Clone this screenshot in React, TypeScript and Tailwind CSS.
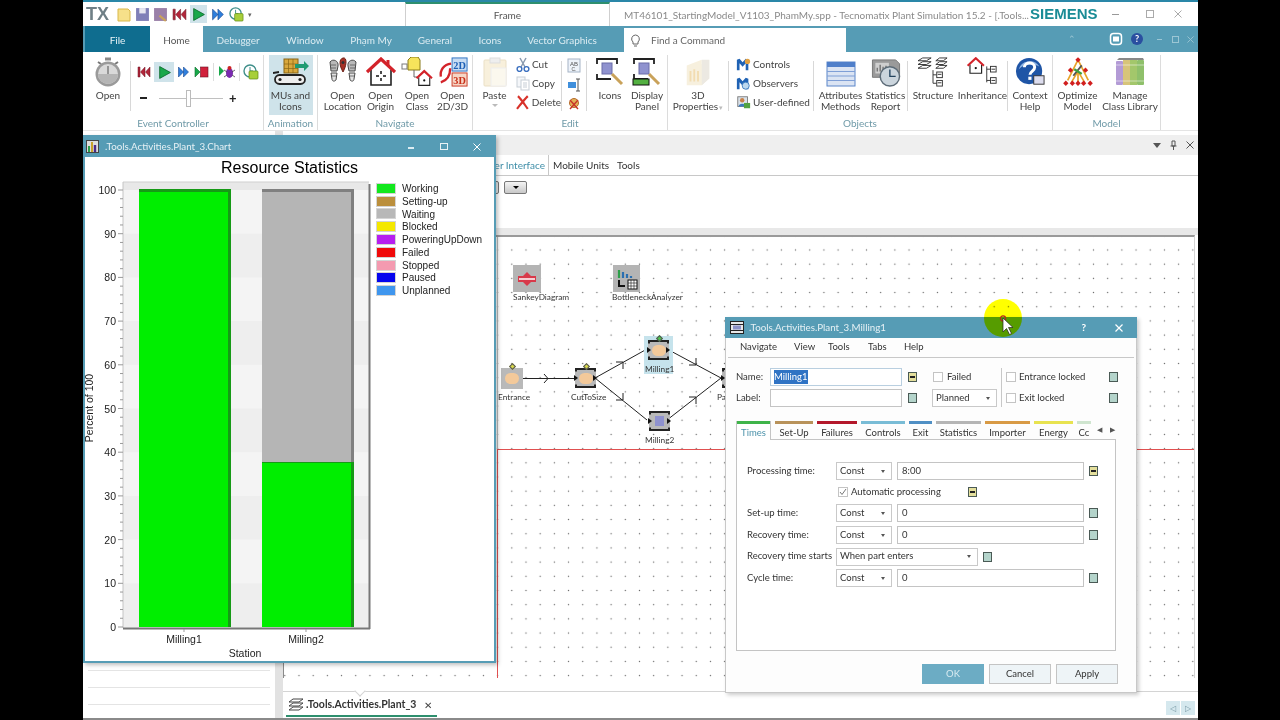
import React from "react";

const Stopwatch = () => (
  <svg width="30" height="30" viewBox="0 0 30 30">
    <rect x="12" y="0.5" width="6" height="3" fill="#888" />
    <path d="M5 5l3 2M25 5l-3 2" stroke="#777" strokeWidth="2" />
    <circle cx="15" cy="17" r="12.5" fill="#9a9a9a" />
    <circle cx="15" cy="17" r="10" fill="#d9d9d9" />
    <path d="M5 17a10 10 0 0 0 20 0z" fill="#b5b5b5" />
    <path d="M15 17V9" stroke="#666" strokeWidth="1.2" />
  </svg>
);
const Rewind = ({ s = 14 }: { s?: number }) => (
  <svg width={s} height={s} viewBox="0 0 14 14">
    <path d="M1 2h2v10H1zM8 2v10L3.5 7zM13 2v10L8.5 7z" fill="#b3263a" stroke="#6b1222" strokeWidth="0.5" />
  </svg>
);
const Play = ({ s = 15 }: { s?: number }) => (
  <svg width={s} height={s} viewBox="0 0 14 14">
    <path d="M2.5 1.5v11L12.5 7z" fill="#19a84a" stroke="#0c6b2c" strokeWidth="0.8" />
  </svg>
);
const Forward = ({ s = 14 }: { s?: number }) => (
  <svg width={s} height={s} viewBox="0 0 14 14">
    <path d="M1.5 2v10L6.5 7zM6.5 2v10L11.5 7z" fill="#2f7fdc" stroke="#17468f" strokeWidth="0.6" />
  </svg>
);
const StepBox = () => (
  <svg width="15" height="14" viewBox="0 0 15 14">
    <path d="M1 2v10l5-5z" fill="#19a84a" stroke="#0c6b2c" strokeWidth="0.6" />
    <rect x="6.5" y="2" width="7.5" height="10" fill="#d1213c" stroke="#6b1222" strokeWidth="0.6" />
  </svg>
);
const Bug = () => (
  <svg width="18" height="16" viewBox="0 0 18 16">
    <path d="M1 2v10l5-5z" fill="#19a84a" />
    <ellipse cx="11.5" cy="9" rx="3.5" ry="5" fill="#7a2bb0" />
    <circle cx="11.5" cy="4" r="2" fill="#c22" />
    <path d="M6 6l3 2M17 6l-3 2M6 13l3-2M17 13l-3-2" stroke="#444" strokeWidth="0.8" />
  </svg>
);
const ClockGreen = ({ s = 16 }: { s?: number }) => (
  <svg width={s} height={s} viewBox="0 0 16 16">
    <circle cx="7" cy="7" r="6" fill="#fff" stroke="#3f8f8a" strokeWidth="1.4" />
    <path d="M7 3v4h3" stroke="#3f8f8a" fill="none" />
    <rect x="6" y="7" width="9" height="8" rx="1" fill="#a8cf3a" stroke="#5d8a14" strokeWidth="0.7" />
  </svg>
);
const Conveyor = () => (
  <svg width="36" height="30" viewBox="0 0 36 30">
    <rect x="11" y="2" width="14" height="14" fill="#d9a83d" stroke="#8a6514" />
    <path d="M11 7h14M11 11.500h14M15.500 2v14M20 2v14" stroke="#8a6514" strokeWidth="0.7" />
    <path d="M22 7h9V4l5 5-5 5v-3h-9z" fill="#1f9a72" />
    <rect x="2" y="18" width="30" height="9" rx="4.500" fill="#eee" stroke="#222" strokeWidth="1.800" />
    <circle cx="7" cy="22.500" r="1.600" fill="#222" />
    <circle cx="27" cy="22.500" r="1.600" fill="#222" />
    <path d="M0 16l6-1" stroke="#222" strokeWidth="1.800" />
  </svg>
);
const Shoe = ({ x, y, flip }: { x: number; y: number; flip?: boolean }) => (
  <g transform={`translate(${x} ${y}) ${flip ? "scale(-1 1)" : ""}`}>
    <path d="M-4 -9c3-4 9-1 8 4l-1 5h-6z" fill="#b9b9b9" stroke="#4a4a4a" />
    <path d="M-3 2h6l-1 7c-2 2-4 1-4-1z" fill="#e2e2e2" stroke="#4a4a4a" />
    <path d="M-3 -6h5M-3 -3h5M-2 5h4" stroke="#555" strokeWidth="0.8" />
  </g>
);
const Shoes = () => (
  <svg width="30" height="30" viewBox="0 0 30 30">
    <Shoe x={6} y={14} />
    <Shoe x={24} y={14} flip />
    <path d="M15 15C11 8 11 2 15 1s4 7 0 14z" fill="#a83226" stroke="#6b2016" />
    <circle cx="15" cy="5.500" r="1.500" fill="#333" />
  </svg>
);
const House = ({ s = 30 }: { s?: number }) => (
  <svg width={s} height={s} viewBox="0 0 30 30">
    <path d="M5 13v15h20V13" fill="#fff" stroke="#222" strokeWidth="1.600" />
    <path d="M1 15L15 2l14 13" fill="none" stroke="#d3232a" strokeWidth="3.200" />
    <path d="M22 3v6" stroke="#d3232a" strokeWidth="3" />
    <path d="M15 14v3M15 21v3M10 19h3M17 19h3" stroke="#111" strokeWidth="1.500" />
  </svg>
);
const ClassIcon = () => (
  <svg width="32" height="30" viewBox="0 0 32 30">
    <rect x="1" y="7" width="5" height="5" fill="#fff" stroke="#7a7a7a" />
    <path d="M7 3l3-3h7l2 3v10H7z" fill="#f6e35b" stroke="#8a7a1a" />
    <path d="M13 13v7h3" stroke="#666" fill="none" />
    <g transform="translate(15 13) scale(0.55)"><path d="M5 13v15h20V13" fill="#fff" stroke="#222" strokeWidth="2" /><path d="M1 15L15 2l14 13" fill="none" stroke="#d3232a" strokeWidth="4" /><circle cx="15" cy="19" r="2" fill="#111" /></g>
  </svg>
);
const TwoD = () => (
  <svg width="32" height="30" viewBox="0 0 32 32">
    <rect x="15" y="1" width="16" height="14" fill="#c7dcf3" stroke="#2a6fc0" />
    <rect x="15" y="17" width="16" height="14" fill="#f6d6c6" stroke="#c8361e" />
    <text x="23" y="12.500" textAnchor="middle" fontSize="11" fontWeight="700" fill="#1d5fb5" fontFamily="Liberation Serif, serif">2D</text>
    <text x="23" y="28.500" textAnchor="middle" fontSize="11" fontWeight="700" fill="#c8301a" fontFamily="Liberation Serif, serif">3D</text>
    <path d="M3 21C2 14 6 8 14 7" fill="none" stroke="#d3232a" strokeWidth="2.500" />
    <path d="M13 12C13 20 10 25 3 27" fill="none" stroke="#d3232a" strokeWidth="2.500" />
  </svg>
);
const PasteIcon = () => (
  <svg width="26" height="30" viewBox="0 0 26 30">
    <rect x="2" y="3" width="22" height="26" rx="1" fill="#f8f0dc" stroke="#eadfc5" />
    <rect x="8" y="1" width="10" height="5" fill="#eee" stroke="#ddd" />
    <rect x="9" y="11" width="15" height="18" fill="#fbf8ee" stroke="#eee" />
  </svg>
);
const CutIcon = () => (
  <svg width="14" height="15" viewBox="0 0 14 15">
    <path d="M4 1l5 9M10 1L5 10" stroke="#8a9bb0" strokeWidth="1.500" />
    <circle cx="3.500" cy="12" r="2.400" fill="none" stroke="#3a6fbf" strokeWidth="1.400" />
    <circle cx="10.500" cy="12" r="2.400" fill="none" stroke="#3a6fbf" strokeWidth="1.400" />
  </svg>
);
const CopyIcon = () => (
  <svg width="14" height="15" viewBox="0 0 14 15" opacity="0.55">
    <rect x="1" y="1" width="8" height="10" fill="#eef2f6" stroke="#9aa7b5" />
    <rect x="5" y="4" width="8" height="10" fill="#fff" stroke="#9aa7b5" />
    <path d="M7 7h4M7 9h4M7 11h4" stroke="#9aa7b5" />
  </svg>
);
const DelIcon = () => (
  <svg width="14" height="15" viewBox="0 0 14 15">
    <path d="M2 1c4 4 7 9 10 13M12 1C8 5 5 9 1 14" stroke="#d8322a" strokeWidth="2.200" fill="none" />
  </svg>
);
const IconsIcon = ({ sub }: { sub?: boolean }) => (
  <svg width="30" height="30" viewBox="0 0 30 30">
    <path d="M2 7V2h20v5M2 17v5h14" fill="none" stroke="#222" strokeWidth="1.800" />
    <rect x="7" y="6" width="10" height="11" fill="#8f92cf" stroke="#6a6da8" />
    <path d="M17 17l10 10" stroke="#c9a25a" strokeWidth="3" />
    {sub && <rect x="1" y="22" width="16" height="6" fill="#53b041" stroke="#111" />}
  </svg>
);
const Cube3D = () => (
  <svg width="30" height="30" viewBox="0 0 30 32">
    <path d="M3 9l16-6v5l8-5v20l-8 7H3z" fill="#f7f0de" />
    <path d="M19 3l8 0v20l-8 7z" fill="#ece9e2" />
    <path d="M7 26V15M11 26V13M15 26V15" stroke="#f2dcb2" strokeWidth="2" />
  </svg>
);
const MIcon = ({ v }: { v: number }) => (
  <svg width="15" height="15" viewBox="0 0 17 15">
    {v === 2 ? (
      <>
        <rect x="2" y="1" width="11" height="11" fill="#dbe3ea" stroke="#777" />
        <circle cx="7" cy="5" r="2.500" fill="#c9824b" />
        <path d="M3 12c0-4 8-4 8 0z" fill="#3a7abf" />
        <rect x="9" y="8" width="7" height="6" fill="#53a341" />
      </>
    ) : (
      <>
        <path d="M1 14V2l3-1 3.500 4L11 1l3 1v12h-3V6L7.500 10 4 6v8z" fill="#1f62b4" />
        {v === 0 ? <circle cx="13" cy="4" r="3" fill="#e2a142" /> : <circle cx="11" cy="10" r="4" fill="#bcd8ef" stroke="#3a7abf" />}
      </>
    )}
  </svg>
);
const AttrTable = () => (
  <svg width="30" height="26" viewBox="0 0 30 26">
    <rect x="1" y="1" width="28" height="24" fill="#dbe4f3" stroke="#5b86c9" />
    <rect x="1" y="1" width="28" height="5" fill="#4f7fca" />
    <path d="M1 10.500h28M1 15h28M1 19.500h28" stroke="#7f9fd6" />
  </svg>
);
const StatReport = () => (
  <svg width="30" height="30" viewBox="0 0 30 31">
    <path d="M1 3h24l4 4v14H1z" fill="#9a9a9a" stroke="#777" />
    <rect x="4" y="6" width="14" height="11" fill="#cfcfcf" />
    <path d="M6 15V11M9 15V8M12 15V10M15 15V9" stroke="#777" strokeWidth="1.500" />
    <circle cx="19" cy="20" r="10" fill="#cbd5dd" stroke="#5c6b77" strokeWidth="1.500" />
    <path d="M19 13v7h6" stroke="#24445f" strokeWidth="1.400" fill="none" />
  </svg>
);
const StructIcon = () => (
  <svg width="36" height="30" viewBox="0 0 36 32">
    {[0, 4, 8].map((d) => (<path key={d} d={`M2 ${4 + d}l5-3h9l-5 3z`} fill="#fff" stroke="#333" />))}
    {[0, 4, 8].map((d) => (<path key={"b" + d} d={`M21 ${4 + d}l4-3h8l-4 3z`} fill="#fff" stroke="#333" />))}
    <path d="M18 14v14M18 19h4M18 28h4" stroke="#333" fill="none" />
    <rect x="22" y="16" width="6" height="6" fill="#fff" stroke="#333" />
    <rect x="22" y="25" width="6" height="6" fill="#fff" stroke="#333" />
    <path d="M23 18.500h4M23 27.500h4" stroke="#333" />
  </svg>
);
const InheritIcon = () => (
  <svg width="34" height="30" viewBox="0 0 34 32">
    <g transform="scale(0.62)"><path d="M5 13v15h20V13" fill="#fff" stroke="#222" strokeWidth="2" /><path d="M1 15L15 2l14 13" fill="none" stroke="#d3232a" strokeWidth="3.500" /><circle cx="15" cy="19" r="2" fill="#111" /></g>
    <path d="M21 10v17M21 13h4M21 25h4" stroke="#333" fill="none" />
    <rect x="25" y="10" width="6" height="6" fill="#fff" stroke="#333" />
    <rect x="25" y="22" width="6" height="6" fill="#fff" stroke="#333" />
    <path d="M26 13h4M26 25h4" stroke="#333" />
  </svg>
);
const HelpIcon = () => (
  <svg width="30" height="30" viewBox="0 0 32 32">
    <circle cx="15" cy="15" r="14" fill="#1f55a6" />
    <path d="M4 13a12 11 0 0 1 22-3C18 6 10 7 4 13z" fill="#8fb4e2" />
    <path d="M10 11c0-6 11-6 11 0 0 4-5 4-5 8" fill="none" stroke="#fff" strokeWidth="3.200" />
    <rect x="14.200" y="21" width="3.400" height="3.400" fill="#fff" />
    <rect x="20" y="20" width="11" height="9" fill="#dde" stroke="#333" />
  </svg>
);
const OptIcon = () => (
  <svg width="30" height="30" viewBox="0 0 32 32">
    <path d="M16 3L5 25M16 3l11 22M16 15v12M16 15L9 27M16 15l7 12" stroke="#e8a42a" strokeWidth="1.800" fill="none" />
    {[[16, 3], [8, 14], [24, 14], [3, 28], [16, 28], [29, 28], [10, 28], [22, 28]].map(([x, y], i) => (
      <rect key={i} x={x - 2} y={y - 2} width="4" height="4" fill="#d11f1f" transform={`rotate(45 ${x} ${y})`} />
    ))}
    <path d="M20 9L11 20" stroke="#555" strokeWidth="2" />
    <path d="M12 13l8 5" stroke="#3f9f3f" strokeWidth="2.500" />
  </svg>
);
const Books = () => (
  <svg width="30" height="30" viewBox="0 0 30 30">
    <rect x="1" y="4" width="7" height="24" rx="1" fill="#b39bd6" />
    <rect x="8" y="3" width="7" height="25" fill="#d7c47a" />
    <rect x="15" y="3" width="7" height="25" fill="#a3c76b" />
    <rect x="22" y="3" width="7" height="25" rx="1" fill="#8fc06b" />
    <path d="M1 8h28M1 24h28" stroke="#ffffff" strokeOpacity="0.5" />
    <path d="M2 3l2-2h24l1 2" fill="#888" />
  </svg>
);
const SmallEdit = ({ k }: { k: number }) => (
  <svg width="14" height="16" viewBox="0 0 14 16">
    {k === 0 && (<><rect x="1" y="1" width="12" height="13" fill="#eef3fa" stroke="#a6b4c6" /><text x="7" y="8" textAnchor="middle" fontSize="6" fill="#555" fontFamily="Liberation Sans">AB</text><text x="7" y="13" textAnchor="middle" fontSize="5" fill="#555" fontFamily="Liberation Sans">C.</text></>)}
    {k === 1 && (<><rect x="1" y="5" width="8" height="6" fill="#3f8fdc" /><path d="M11 2v12M9 2h4M9 14h4" stroke="#555" /></>)}
    {k === 2 && (<><circle cx="7" cy="7" r="4.500" fill="#e2b25a" stroke="#b56b2a" /><path d="M3 13l8-9M3 4l8 9" stroke="#c9342a" strokeWidth="1.400" /></>)}
  </svg>
);

const RibbonItem = ({ w, icon, a, b }: { w: number; icon: React.ReactNode; a: string; b?: React.ReactNode }) => (
  <div className="flex shrink-0 flex-col items-center" style={{ width: w }}>
    <div className="flex h-[32px] items-end justify-center">{icon}</div>
    <div className="mt-[3px] whitespace-nowrap text-center text-[10px] leading-[11px] text-[#444]">{a}</div>
    {b && <div className="whitespace-nowrap text-center text-[10px] leading-[11px] text-[#444]">{b}</div>}
  </div>
);
const VSep = () => <div className="mt-[6px] h-[50px] w-px shrink-0 bg-[#d8d8d8]" />;
const Group = ({ w, label, children, cls }: { w: number; label: string; children: React.ReactNode; cls?: string }) => (
  <div className="flex h-full shrink-0 flex-col border-r border-[#dcdcdc]" style={{ width: w }}>
    <div className={`flex h-[61px] shrink-0 ${cls ?? ""}`}>{children}</div>
    <div className="mt-[1px] text-center text-[10px] leading-[12px] text-[#6f9aa8]">{label}</div>
  </div>
);
const SmallRow = ({ icon, t }: { icon: React.ReactNode; t: string }) => (
  <div className="flex h-[19px] items-center gap-[2px] whitespace-nowrap text-[10px] text-[#444]">{icon}<span>{t}</span></div>
);

const Swatch = ({ on }: { on?: boolean }) => (
  <div className={`flex h-[10px] w-[9px] shrink-0 items-center justify-center border border-[#4a5a55] ${on ? "bg-[#e4df9c]" : "bg-[#b4d4cb]"}`}>
    {on && <div className="h-[2px] w-[5px] bg-[#222]" />}
  </div>
);
const Check = ({ on }: { on?: boolean }) => (
  <div className="flex h-[10px] w-[10px] shrink-0 items-center justify-center border border-[#c4c4c4] bg-white">
    {on && <svg width="8" height="8" viewBox="0 0 8 8"><path d="M1 4l2 2.500L7 1" stroke="#777" fill="none" /></svg>}
  </div>
);
const Select = ({ t, w }: { t: string; w: number }) => (
  <div className="flex h-[18px] shrink-0 items-center justify-between border border-[#c9c9c9] bg-white pl-[3px] pr-[6px] text-[9.500px] text-[#333]" style={{ width: w }}>
    <span>{t}</span>
    <span className="h-0 w-0 border-x-[2px] border-t-[3px] border-x-transparent border-t-[#555]" />
  </div>
);
const FormRow = ({ label, v }: { label: string; v: string }) => (
  <div className="flex h-[22px] shrink-0 items-center">
    <div className="w-[99px] shrink-0 whitespace-nowrap pl-[10px] text-[9.500px] text-[#333]">{label}</div>
    <Select t="Const" w={56} />
    <div className="ml-[5px] flex h-[18px] w-[187px] items-center border border-[#c4c4c4] bg-white pl-[4px] text-[9.500px] text-[#333]">{v}</div>
    <div className="ml-[5px]"><Swatch on={v === "8:00"} /></div>
  </div>
);

const tabs = [
  { t: "Times", w: 35, c: "#3fb44a" },
  { t: "Set-Up", w: 38, c: "#b8925a" },
  { t: "Failures", w: 40, c: "#b3172a" },
  { t: "Controls", w: 44, c: "#79bcd6" },
  { t: "Exit", w: 23, c: "#4f8fc4" },
  { t: "Statistics", w: 45, c: "#b5b5b5" },
  { t: "Importer", w: 45, c: "#d89a45" },
  { t: "Energy", w: 39, c: "#e8e350" },
  { t: "Cc", w: 14, c: "#cfe5cf" },
];
const legend = [
  ["Working", "#12e81e"],
  ["Setting-up", "#bb8f3c"],
  ["Waiting", "#b8b8b8"],
  ["Blocked", "#f4e800"],
  ["PoweringUpDown", "#b61ff0"],
  ["Failed", "#f00a0a"],
  ["Stopped", "#f49ab0"],
  ["Paused", "#0505ee"],
  ["Unplanned", "#3f96ee"],
];

const Chart = () => {
  const ticks = Array.from({ length: 11 }, (_, i) => i * 10);
  const Y = (v: number) => 627 - v * 4.37;
  const minor = Array.from({ length: 51 }, (_, i) => i * 2);
  return (
    <svg width="290" height="481" viewBox="85 179 290 481" className="shrink-0 overflow-visible">
      <g fontFamily="Liberation Sans, sans-serif" fontSize="10.500" fill="#222">
        <rect x="123" y="182" width="246" height="446" fill="#f4f4f4" />
        <rect x="123" y="182" width="246" height="8" fill="#e8e8e8" />
        {ticks.slice(0, 10).map((v) => v % 20 === 0 && <rect key={v} x="123" y={Y(v + 10)} width="246" height="43.700" fill="#eeeeee" />)}
        <path d="M123 182h246" stroke="#cfcfcf" />
        <path d="M123 182v446" stroke="#c4c4c4" />
        <path d="M369.500 184v445M123 628.500h247" stroke="#777" strokeWidth="2" />
        {minor.map((v) => <path key={v} d={`M${v % 10 === 0 ? 118 : 120} ${Y(v)}h${v % 10 === 0 ? 5 : 3}`} stroke="#999" />)}
        {ticks.map((v) => <text key={v} x="116" y={Y(v) + 4} textAnchor="end">{v}</text>)}
        <rect x="139" y="189" width="92" height="438" fill="#169a16" />
        <rect x="139" y="192" width="89" height="435" fill="#00ee00" />
        <rect x="262" y="189" width="92" height="273" fill="#808080" />
        <rect x="262" y="192" width="89" height="270" fill="#b5b5b5" />
        <rect x="262" y="462" width="92" height="165" fill="#169a16" />
        <rect x="262" y="463" width="89" height="164" fill="#00ee00" />
        <path d="M184 629v3M306 629v3" stroke="#999" />
        <text x="184" y="643" textAnchor="middle">Milling1</text>
        <text x="306" y="643" textAnchor="middle">Milling2</text>
        <text x="245" y="657" textAnchor="middle">Station</text>
        <text transform="translate(93 408) rotate(-90)" textAnchor="middle">Percent of 100</text>
      </g>
    </svg>
  );
};

const ChartWindow = () => (
  <div className="absolute left-[83px] top-[135px] flex h-[528px] w-[413px] flex-col border-x-2 border-b-2 border-[#569cb5] bg-white font-['Liberation_Sans',sans-serif] shadow-[2px_2px_4px_rgba(0,0,0,0.25)]">
    <div className="-mx-[2px] flex h-[22px] shrink-0 items-center bg-[#569cb5] pl-[3px] pt-[1px] font-['Lato',sans-serif] text-[9.750px] text-[#e6f1f5]">
      <svg width="13" height="13" viewBox="0 0 13 13" className="mr-[6px]">
        <rect x="0.500" y="0.500" width="12" height="12" fill="#ddd" stroke="#444" />
        <path d="M3 12V6" stroke="#2a9f4a" strokeWidth="2" />
        <path d="M6 12V2" stroke="#c9a22a" strokeWidth="2" />
        <path d="M9 12V5" stroke="#4a2a8a" strokeWidth="2.400" />
      </svg>
      <span>.Tools.Activities.Plant_3.Chart</span>
      <div className="ml-auto flex items-center pr-[15px] text-white">
        <div className="mr-[26px] mt-[2px] h-[2px] w-[6px] bg-[#dcecf2]" />
        <div className="mr-[25px] h-[7px] w-[8px] border border-[#e8f2f5]" />
        <svg width="8" height="8" viewBox="0 0 8 8"><path d="M0.500 0.500l7 7M7.500 0.500l-7 7" stroke="#fff" /></svg>
      </div>
    </div>
    <div className="h-[22px] shrink-0 text-center text-[16px] leading-[21px] text-black">Resource Statistics</div>
    <div className="flex">
      <Chart />
      <div className="flex flex-col pl-[1px] pt-[3px] text-[10px] text-[#222]">
        {legend.map(([t, c]) => (
          <div key={t} className="flex h-[12.800px] items-center whitespace-nowrap">
            <div className="mr-[6px] h-[11px] w-[20px] border border-[#d4d4d4]" style={{ backgroundColor: c }} />
            {t}
          </div>
        ))}
      </div>
    </div>
  </div>
);

const Dialog = () => (
  <div className="absolute left-[725px] top-[317px] flex h-[376px] w-[412px] flex-col border-x border-b border-[#c8c8c8] bg-[#fdfdfd] text-[#333] shadow-[2px_2px_4px_rgba(0,0,0,0.2)]">
    <div className="-mx-px flex h-[21px] shrink-0 items-center bg-[#569cb5] pl-[5px] text-[9.750px] text-[#e6f1f5]">
      <svg width="14" height="13" viewBox="0 0 14 13" className="mr-[5px]">
        <rect x="0.500" y="0.500" width="13" height="12" fill="#e8e8e8" stroke="#222" />
        <path d="M0.500 3.500h13M0.500 9.500h13" stroke="#222" />
        <rect x="3" y="4.500" width="8" height="4" fill="#8d92c8" />
      </svg>
      <span>.Tools.Activities.Plant_3.Milling1</span>
      <span className="ml-auto mr-[29px] text-[10px] font-bold text-white">?</span>
      <svg width="8" height="8" viewBox="0 0 8 8" className="mr-[14px]"><path d="M0.500 0.500l7 7M7.500 0.500l-7 7" stroke="#fff" strokeWidth="1.200" /></svg>
    </div>
    <div className="mx-[2px] flex h-[20px] shrink-0 items-center border-b border-[#c8c8c8] pl-[12px] text-[9.500px]">
      <span className="w-[54px]">Navigate</span>
      <span className="w-[34px]">View</span>
      <span className="w-[40px]">Tools</span>
      <span className="w-[36px]">Tabs</span>
      <span>Help</span>
    </div>
    <div className="mt-[10px] flex h-[40px] shrink-0">
      <div className="flex w-[275px] flex-col gap-[3px] pl-[10px]">
        <div className="flex h-[18px] items-center">
          <span className="w-[34px] text-[9.500px]">Name:</span>
          <div className="flex h-[18px] w-[132px] items-center border border-[#b9cfe0] bg-white pl-[3px] text-[9.500px]">
            <span className="bg-[#2f73c4] text-white">Milling1</span>
          </div>
          <div className="ml-[6px]"><Swatch on /></div>
          <div className="ml-[16px]"><Check /></div>
          <span className="ml-[4px] text-[9.500px]">Failed</span>
        </div>
        <div className="flex h-[18px] items-center">
          <span className="w-[34px] text-[9.500px]">Label:</span>
          <div className="h-[18px] w-[132px] border border-[#c4c4c4] bg-white" />
          <div className="ml-[6px]"><Swatch /></div>
          <div className="ml-[15px]"><Select t="Planned" w={65} /></div>
        </div>
      </div>
      <div className="h-[39px] w-px bg-[#c8c8c8]" />
      <div className="flex flex-col gap-[3px] pl-[4px]">
        <div className="flex h-[18px] w-[112px] items-center">
          <Check />
          <span className="ml-[3px] text-[9.500px]">Entrance locked</span>
          <div className="ml-auto"><Swatch /></div>
        </div>
        <div className="flex h-[18px] w-[112px] items-center">
          <Check />
          <span className="ml-[3px] text-[9.500px]">Exit locked</span>
          <div className="ml-auto"><Swatch /></div>
        </div>
      </div>
    </div>
    <div className="relative mt-[13px] flex shrink-0 gap-[4px] pl-[10px]">
      {tabs.map((t, i) => (
        <div key={t.t} className={`relative z-10 shrink-0 overflow-hidden ${i === 0 ? "h-[19px] border-x border-[#c4c4c4] bg-white" : "h-[18px]"}`} style={{ width: t.w }}>
          <div className="h-[3px]" style={{ backgroundColor: t.c }} />
          <div className={`whitespace-nowrap pt-[2px] text-center text-[9.500px] leading-[13px] ${i === 0 ? "text-[#4d93ab]" : ""}`}>{t.t}</div>
        </div>
      ))}
      <div className="z-10 flex items-center gap-[8px] pb-[3px] pl-[2px] text-[7px] text-[#555]">
        <span>◀</span>
        <span>▶</span>
      </div>
    </div>
    <div className="mx-[10px] -mt-px flex h-[212px] w-[380px] flex-col border border-[#c4c4c4] bg-white pt-[20px]">
      <FormRow label="Processing time:" v="8:00" />
      <div className="flex h-[20px] shrink-0 items-center pl-[101px] text-[9.500px]">
        <Check on />
        <span className="ml-[3px] w-[117px]">Automatic processing</span>
        <Swatch on />
      </div>
      <FormRow label="Set-up time:" v="0" />
      <FormRow label="Recovery time:" v="0" />
      <div className="flex h-[21px] shrink-0 items-center">
        <div className="w-[99px] shrink-0 whitespace-nowrap pl-[10px] text-[9.500px]">Recovery time starts</div>
        <Select t="When part enters" w={142} />
        <div className="ml-[5px]"><Swatch /></div>
      </div>
      <FormRow label="Cycle time:" v="0" />
    </div>
    <div className="mt-[13px] flex justify-end gap-[5px] pr-[18px] text-[9.500px]">
      <div className="flex h-[20px] w-[62px] items-center justify-center bg-[#6cacc4] text-[#d8eaf0]">OK</div>
      <div className="flex h-[20px] w-[62px] items-center justify-center border border-[#c4c4c4] bg-[#eef4f7]">Cancel</div>
      <div className="flex h-[20px] w-[62px] items-center justify-center border border-[#c4c4c4] bg-[#eef4f7]">Apply</div>
    </div>
  </div>
);

const NodeBox = ({ x, y, label, lx, ly, w = 21, h = 20, inner = "#f3c99a", bracket, dot, selected }: { x: number; y: number; label: string; lx: number; ly: number; w?: number; h?: number; inner?: string; bracket?: boolean; dot?: string; selected?: boolean }) => (
  <>
    {selected && <div className="absolute bg-[#c6e3ec]" style={{ left: x - 4, top: y - 4, width: 29, height: 38 }} />}
    <div className="absolute flex items-center justify-center bg-[#b9b9b9]" style={{ left: x, top: y, width: w, height: h }}>
      {bracket && <div className="absolute inset-0 border-2 border-[#222] [clip-path:polygon(0_0,100%_0,100%_18%,0_18%,0_82%,100%_82%,100%_100%,0_100%)]" />}
      <div className={inner === "#8f92cf" ? "h-[10px] w-[9px]" : "h-[11px] w-[14px] rounded-full"} style={{ backgroundColor: inner }} />
      {bracket && <div className="absolute left-[-1px] top-[7px] h-0 w-0 border-y-[3px] border-l-[4px] border-y-transparent border-l-[#111]" />}
      {bracket && <div className="absolute right-[-1px] top-[7px] h-0 w-0 border-y-[3px] border-l-[4px] border-y-transparent border-l-[#111]" />}
    </div>
    {dot && <div className="absolute h-[5px] w-[5px] rotate-45 border border-[#555]" style={{ left: x + w / 2 - 2, top: y - 4, backgroundColor: dot }} />}
    <div className="absolute whitespace-nowrap text-[8.300px] leading-[11px] text-[#333]" style={{ left: lx, top: ly }}>{label}</div>
  </>
);

const Canvas = () => (
  <div className="relative h-[443px] w-[912px] shrink-0 overflow-hidden border-l border-r border-t-2 border-l-[#8a8a8a] border-r-[#d4d4d4] border-t-[#9a9a9a] bg-white bg-[radial-gradient(circle,#666_0.6px,transparent_1px)] bg-[length:14.200px_14.200px] bg-[position:-6.300px_5.900px]">
    <div className="absolute left-[213px] top-0 h-[212px] w-px bg-[#bcbcbc]" />
    <div className="absolute left-[213px] top-[212px] h-[231px] w-px bg-[#e05050]" />
    <div className="absolute left-[213px] top-[212px] h-px w-[698px] bg-[#e05050]" />
    <svg className="absolute left-0 top-0" width="911" height="441" viewBox="285 237 911 441">
      <g fill="none" stroke="#222" strokeWidth="1">
        <path d="M523 378.500h52M596 378l52-29M596 378l52 42M668 349l54 29M668 420l54-42" />
        <path d="M545 374l4 4.500-4 4.500M617 362h7v7M624 393v7h-7M697 358v7h-7M690 397h7v7" />
      </g>
    </svg>
    <div className="absolute left-[229px] top-[28px] flex h-[27px] w-[28px] items-center justify-center bg-[#b4b4b4]">
      <svg width="20" height="16" viewBox="0 0 20 16"><path d="M10 1l4 4h5v6h-5l-4 4-4-4H1V5h5z" fill="#d8394a" /><path d="M2 8h16" stroke="#fff" strokeWidth="1.500" /></svg>
    </div>
    <div className="absolute left-[229px] top-[55px] whitespace-nowrap text-[8.300px] leading-[11px] text-[#333]">SankeyDiagram</div>
    <div className="absolute left-[329px] top-[28px] flex h-[27px] w-[27px] items-center justify-center bg-[#b4b4b4]">
      <svg width="24" height="24" viewBox="0 0 24 24">
        <path d="M8 11V5M12 11V7M16 11V9" stroke="#2a6fb0" strokeWidth="2.200" />
        <path d="M4 11V3" stroke="#2e9f4a" strokeWidth="2.200" />
        <path d="M4 13v6h6" fill="none" stroke="#111" strokeWidth="2" />
        <rect x="13" y="13" width="9" height="9" fill="#fff" stroke="#111" />
        <path d="M16 13v9M19 13v9M13 16h9M13 19h9" stroke="#111" strokeWidth="0.600" />
      </svg>
    </div>
    <div className="absolute left-[328px] top-[55px] whitespace-nowrap text-[8.300px] leading-[11px] text-[#333]">BottleneckAnalyzer</div>
    <NodeBox x={217} y={131} w={22} h={21} label="Entrance" lx={214} ly={155} dot="#d9d94a" />
    <NodeBox x={291} y={131} label="CutToSize" lx={287} ly={155} bracket dot="#d9d94a" />
    <NodeBox x={364} y={103} label="Milling1" lx={361} ly={127} bracket dot="#4ec04e" selected />
    <NodeBox x={365} y={174} label="Milling2" lx={361} ly={198} bracket inner="#8f92cf" />
    <NodeBox x={438} y={131} label="Parallel" lx={433} ly={155} bracket />
  </div>
);

export default function App() {
  return (
    <div className="relative h-[720px] w-[1280px] overflow-hidden bg-black font-['Lato','Noto_Sans',sans-serif]">
      <div className="ml-[83px] flex h-[720px] w-[1115px] flex-col bg-white">
        {/* title bar */}
        <div className="flex h-[26px] shrink-0 items-center border-t-2 border-[#2a87a8] bg-white">
          <div className="flex w-[322px] shrink-0 items-center">
            <span className="ml-[3px] w-[30px] font-['Liberation_Sans',sans-serif] text-[18px] font-bold leading-none text-[#6f7f86]">TX</span>
            <div className="flex items-center gap-[3.500px]">
              <svg width="15" height="15" viewBox="0 0 15 15"><path d="M2 2h10l2 2v10H2z" fill="#f6e08a" stroke="#d8b84a" /></svg>
              <svg width="15" height="15" viewBox="0 0 14 14"><rect x="1" y="1" width="12" height="12" fill="#7f7fb8" /><rect x="4" y="1" width="6" height="5" fill="#e6e6f0" /></svg>
              <svg width="15" height="15" viewBox="0 0 14 14"><rect x="1" y="1" width="12" height="12" fill="#9a80a8" /><path d="M6 8l6 5" stroke="#c9a25a" strokeWidth="2" /></svg>
              <Rewind s={15} />
              <div className="flex h-[18px] w-[17px] items-center justify-center bg-[#cfe3ea]"><Play /></div>
              <Forward s={15} />
              <ClockGreen s={15} />
              <span className="text-[7px] text-[#666]">▾</span>
            </div>
          </div>
          <div className="flex h-[24px] w-[205px] shrink-0 items-center justify-center border-x border-t-[2px] border-x-[#cfcfcf] border-t-[#2e8f6e] bg-white text-[10px] text-[#555]">Frame</div>
          <span className="ml-[14px] mt-[2px] w-[401px] shrink-0 whitespace-nowrap text-[10px] text-[#8a8a8a]">MT46101_StartingModel_V1103_PhamMy.spp - Tecnomatix Plant Simulation 15.2 - [.Tools...</span>
          <span className="ml-[5px] font-['Liberation_Sans',sans-serif] text-[15px] font-bold text-[#1a8c96]">SIEMENS</span>
          <div className="ml-auto flex items-center pr-[16px] text-[#aaa]">
            <div className="mr-[27px] h-px w-[7px] bg-[#999]" />
            <div className="mr-[20px] h-[8px] w-[8px] border border-[#aaa]" />
            <svg width="8" height="8" viewBox="0 0 8 8"><path d="M0.500 0.500l7 7M7.500 0.500l-7 7" stroke="#aaa" /></svg>
          </div>
        </div>
        {/* tab bar */}
        <div className="flex h-[26px] shrink-0 items-stretch bg-[#569cb5] pl-[2px] text-[10px] text-[#dcecf2]">
          <div className="flex w-[65px] items-center justify-center bg-[#0f6d8f] pt-[2px] text-[#e8f3f6]">File</div>
          <div className="flex w-[53px] items-center justify-center bg-white pt-[2px] text-[#555]">Home</div>
          <div className="flex w-[70px] items-center justify-center pt-[2px]">Debugger</div>
          <div className="flex w-[64px] items-center justify-center pt-[2px]">Window</div>
          <div className="flex w-[68px] items-center justify-center pt-[2px]">Phạm My</div>
          <div className="flex w-[60px] items-center justify-center pt-[2px]">General</div>
          <div className="flex w-[50px] items-center justify-center pt-[2px]">Icons</div>
          <div className="flex w-[94px] items-center justify-center whitespace-nowrap pt-[2px]">Vector Graphics</div>
          <div className="ml-[15px] mt-[2px] flex w-[222px] items-center bg-white pl-[6px] pt-[1px] text-[#666]">
            <svg width="11" height="13" viewBox="0 0 11 13" className="mr-[10px]"><path d="M5.500 1a4 4 0 0 0-2.500 7v2h5V8a4 4 0 0 0-2.500-7zM4 12h3" fill="none" stroke="#666" /></svg>
            Find a Command
          </div>
          <div className="ml-auto flex items-center pr-[4px] text-[#cfe3ea]">
            <span className="mr-[33px] text-[9px] text-[#9cc6d4]">⌃</span>
            <svg width="14" height="14" viewBox="0 0 14 14" className="mr-[8px]"><rect x="1.500" y="1.500" width="11" height="11" rx="3" fill="none" stroke="#fff" strokeWidth="1.500" /><rect x="4" y="4.500" width="6" height="5" fill="#fff" /></svg>
            <div className="mr-[14px] flex h-[12px] w-[12px] items-center justify-center rounded-full bg-[#2a4fa0] text-[9px] font-bold text-white">?</div>
            <div className="mr-[10px] h-px w-[5px] bg-[#9cc6d4]" />
            <div className="mr-[8px] h-[7px] w-[7px] border border-[#9cc6d4]" />
            <svg width="7" height="7" viewBox="0 0 8 8"><path d="M0.500 0.500l7 7M7.500 0.500l-7 7" stroke="#9cc6d4" /></svg>
          </div>
        </div>
        {/* ribbon */}
        <div className="flex h-[79px] shrink-0 border-b border-[#e4e4e4] bg-white pt-[3px]">
          <Group w={181} label="Event Controller">
            <div className="w-[47px] pl-[3px]"><RibbonItem w={44} icon={<Stopwatch />} a="Open" /></div>
            <VSep />
            <div className="flex flex-col pl-[6px]">
              <div className="mt-[7px] flex h-[20px] items-center gap-[3px]">
                <Rewind />
                <div className="flex h-[20px] w-[20px] items-center justify-center bg-[#cfe3ea]"><Play /></div>
                <Forward />
                <StepBox />
                <div className="mx-[1px] h-[18px] w-px bg-[#ddd]" />
                <Bug />
                <div className="h-[18px] w-px bg-[#ddd]" />
                <ClockGreen />
              </div>
              <div className="mt-[8px] flex h-[16px] items-center pl-[3px]">
                <span className="h-[2px] w-[7px] bg-[#222]" />
                <div className="relative ml-[12px] h-px w-[64px] bg-[#c0c0c0]">
                  <div className="absolute left-[27px] top-[-8px] h-[17px] w-[5px] border border-[#bbb] bg-white" />
                </div>
                <span className="ml-[6px] text-[13px] font-bold leading-none text-[#222]">+</span>
              </div>
            </div>
          </Group>
          <Group w={54} label="Animation" cls="justify-center">
            <div className="h-[60px] w-[44px] bg-[#cfe3ea]"><RibbonItem w={44} icon={<Conveyor />} a="MUs and" b="Icons" /></div>
          </Group>
          <Group w={155} label="Navigate" cls="pl-[5px]">
            <RibbonItem w={39} icon={<Shoes />} a="Open" b="Location" />
            <RibbonItem w={37} icon={<House />} a="Open" b="Origin" />
            <RibbonItem w={36} icon={<ClassIcon />} a="Open" b="Class" />
            <RibbonItem w={35} icon={<TwoD />} a="Open" b="2D/3D" />
          </Group>
          <Group w={195} label="Edit" cls="pl-[5px]">
            <div className="w-[33px]">
              <RibbonItem w={33} icon={<PasteIcon />} a="Paste" />
              <div className="mx-auto mt-[3px] h-0 w-0 border-x-[3px] border-t-[3px] border-x-transparent border-t-[#bbb]" />
            </div>
            <div className="flex w-[50px] flex-col pl-[5px]">
              <SmallRow icon={<CutIcon />} t="Cut" />
              <SmallRow icon={<CopyIcon />} t="Copy" />
              <SmallRow icon={<DelIcon />} t="Delete" />
            </div>
            <VSep />
            <div className="flex w-[24px] flex-col items-center gap-[3px] pt-[3px]">
              <SmallEdit k={0} /><SmallEdit k={1} /><SmallEdit k={2} />
            </div>
            <VSep />
            <div className="w-[3px] shrink-0" />
            <RibbonItem w={40} icon={<IconsIcon />} a="Icons" />
            <RibbonItem w={34} icon={<IconsIcon sub />} a="Display" b="Panel" />
          </Group>
          <Group w={385} label="Objects">
            <RibbonItem w={60} icon={<Cube3D />} a="3D" b={<>Properties<span className="ml-[1px] text-[7px] text-[#bbb]">▾</span></>} />
            <VSep />
            <div className="flex w-[84px] flex-col pl-[7px]">
              <SmallRow icon={<MIcon v={0} />} t="Controls" />
              <SmallRow icon={<MIcon v={1} />} t="Observers" />
              <SmallRow icon={<MIcon v={2} />} t="User-defined" />
            </div>
            <VSep />
            <div className="w-[3px] shrink-0" />
            <RibbonItem w={47} icon={<AttrTable />} a="Attributes" b="Methods" />
            <RibbonItem w={43} icon={<StatReport />} a="Statistics" b="Report" />
            <VSep />
            <RibbonItem w={50} icon={<StructIcon />} a="Structure" />
            <RibbonItem w={49} icon={<InheritIcon />} a="Inheritance" />
            <VSep />
            <RibbonItem w={44} icon={<HelpIcon />} a="Context" b="Help" />
          </Group>
          <Group w={108} label="Model">
            <RibbonItem w={49} icon={<OptIcon />} a="Optimize" b="Model" />
            <RibbonItem w={56} icon={<Books />} a="Manage" b="Class Library" />
          </Group>
        </div>
        {/* body */}
        <div className="flex min-h-0 flex-1">
          <div className="flex w-[192px] shrink-0 flex-col justify-end pb-[13px]">
            <div className="mx-[5px] h-[17px] border-b border-[#e4e4e4]" />
            <div className="mx-[5px] h-[17px] border-b border-[#e4e4e4]" />
            <div className="mx-[5px] h-[17px] border-b border-[#e4e4e4]" />
          </div>
          <div className="w-[8px] shrink-0 bg-[#e2e2e2]" />
          <div className="flex min-w-0 flex-1 flex-col">
            <div className="mt-[4px] flex h-[20px] shrink-0 items-center justify-end gap-[8px] bg-[#efefef] pr-[4px] text-[#666]">
              <span className="h-0 w-0 border-x-[4px] border-t-[5px] border-x-transparent border-t-[#555]" />
              <svg width="9" height="11" viewBox="0 0 9 11"><path d="M3 1h3v5H3zM1.500 6h6M4.500 6v4" fill="none" stroke="#555" /></svg>
              <svg width="8" height="8" viewBox="0 0 8 8"><path d="M0.500 0.500l7 7M7.500 0.500l-7 7" stroke="#555" /></svg>
            </div>
            <div className="flex h-[21px] shrink-0 items-center border-b border-[#c8c8c8] pt-[1px] text-[10px] text-[#333]">
              <div className="flex h-[21px] w-[266px] items-center justify-end border-r border-[#c8c8c8] pr-[3px] text-[#3f8ea8]">User Interface</div>
              <span className="ml-[4px] w-[64px]">Mobile Units</span>
              <span>Tools</span>
            </div>
            <div className="flex h-[52px] shrink-0 gap-[5px] pl-[193px] pt-[5px]">
              <div className="h-[13px] w-[23px] rounded-[2px] border border-[#777] bg-[#e8e8e8]" />
              <div className="flex h-[13px] w-[23px] items-center justify-center rounded-[2px] border border-[#777] bg-gradient-to-b from-[#f4f4f4] to-[#c8c8c8]">
                <span className="h-0 w-0 border-x-[3px] border-t-[3px] border-x-transparent border-t-black" />
              </div>
            </div>
            <div className="h-[7px] shrink-0 bg-[#e8e8e8]" />
            <Canvas />
            <div className="h-[13px] shrink-0" />
            <div className="relative flex h-[27px] shrink-0 items-start border-t border-[#d4d4d4] pl-[3px]">
              <div className="absolute left-[73px] top-[-5px] h-[8px] w-[8px] rotate-45 border-b border-r border-[#d4d4d4] bg-white" />
              <div className="mt-[3px] flex h-[22px] w-[151px] items-center border-b-2 border-[#2e8f6e] pl-[2px] text-[10.500px] font-bold text-[#333]">
                <svg width="17" height="14" viewBox="0 0 17 14" className="mr-[1px]"><path d="M1 4l4-3h10l-4 3zM1 8l4-3h10l-4 3zM1 12l4-3h10l-4 3z" fill="#fff" stroke="#444" /></svg>
                <span className="whitespace-nowrap">.Tools.Activities.Plant_3</span>
                <span className="ml-auto mr-[5px] text-[10px] font-normal text-[#444]">✕</span>
              </div>
              <div className="ml-auto mr-[3px] mt-[9px] flex gap-[1px]">
                <div className="flex h-[14px] w-[14px] items-center justify-center bg-[#d5e8ee] text-[8px] text-[#7a9aa6]">◁</div>
                <div className="flex h-[14px] w-[14px] items-center justify-center bg-[#d5e8ee] text-[8px] text-[#7a9aa6]">▷</div>
              </div>
            </div>
          </div>
        </div>
        <div className="h-[2px] shrink-0 bg-[#8a8a8a]" />
      </div>
      <ChartWindow />
      <Dialog />
      {/* pointer highlight */}
      <div className="absolute left-[984px] top-[299px] h-[38px] w-[38px] rounded-full bg-[#ffff00] mix-blend-multiply" />
      <svg className="absolute left-[999px] top-[315px]" width="16" height="22" viewBox="0 0 16 22">
        <circle cx="4" cy="3.500" r="2.600" fill="none" stroke="#b3261e" strokeWidth="1.200" />
        <path d="M4 3v14l3.500-3.500 3 6 2-1-3-6H14z" fill="#fff" stroke="#222" strokeWidth="0.700" />
      </svg>
    </div>
  );
}
